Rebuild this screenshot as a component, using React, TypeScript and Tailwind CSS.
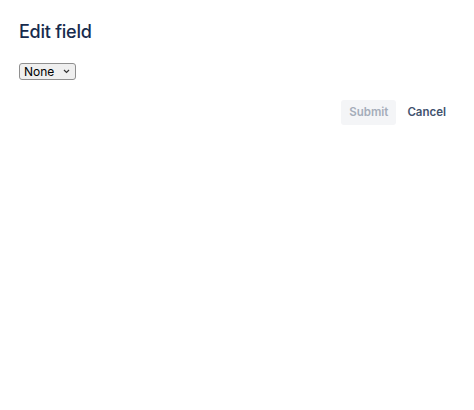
import React from "react";

export default function App() {
  return (
    <div className="w-[474px] h-[410px] bg-white pl-[19px] pr-[16px] pt-[22px] font-['Inter',sans-serif]">
      <h1 className="text-[18px] leading-[20px] font-medium tracking-[-0.25px] text-[#172b4d]">Edit field</h1>
      <div className="mt-[21px] flex">
        <div className="w-[57px] h-[17px] flex items-center justify-between pl-[4px] pr-[5px] rounded-[3px] border border-[#8f8f8f] bg-[#efefef] text-[12px] leading-none text-black font-['Liberation Sans',sans-serif]">
          <span>None</span>
          <svg width="7" height="5" viewBox="0 0 7 5" className="text-[#333]">
            <path d="M1 1 L3.5 3.5 L6 1" fill="none" stroke="currentColor" strokeWidth="1.2" />
          </svg>
        </div>
      </div>
      <div className="mt-[20px] flex justify-end items-center">
        <button className="h-[25px] w-[55px] rounded-[3px] bg-[#f4f5f7] text-[#a5adba] text-[11.5px] font-semibold">Submit</button>
        <button className="h-[25px] pl-[11px] pr-[12px] rounded-[3px] text-[#42526e] text-[11.5px] font-semibold">Cancel</button>
      </div>
    </div>
  );
}
